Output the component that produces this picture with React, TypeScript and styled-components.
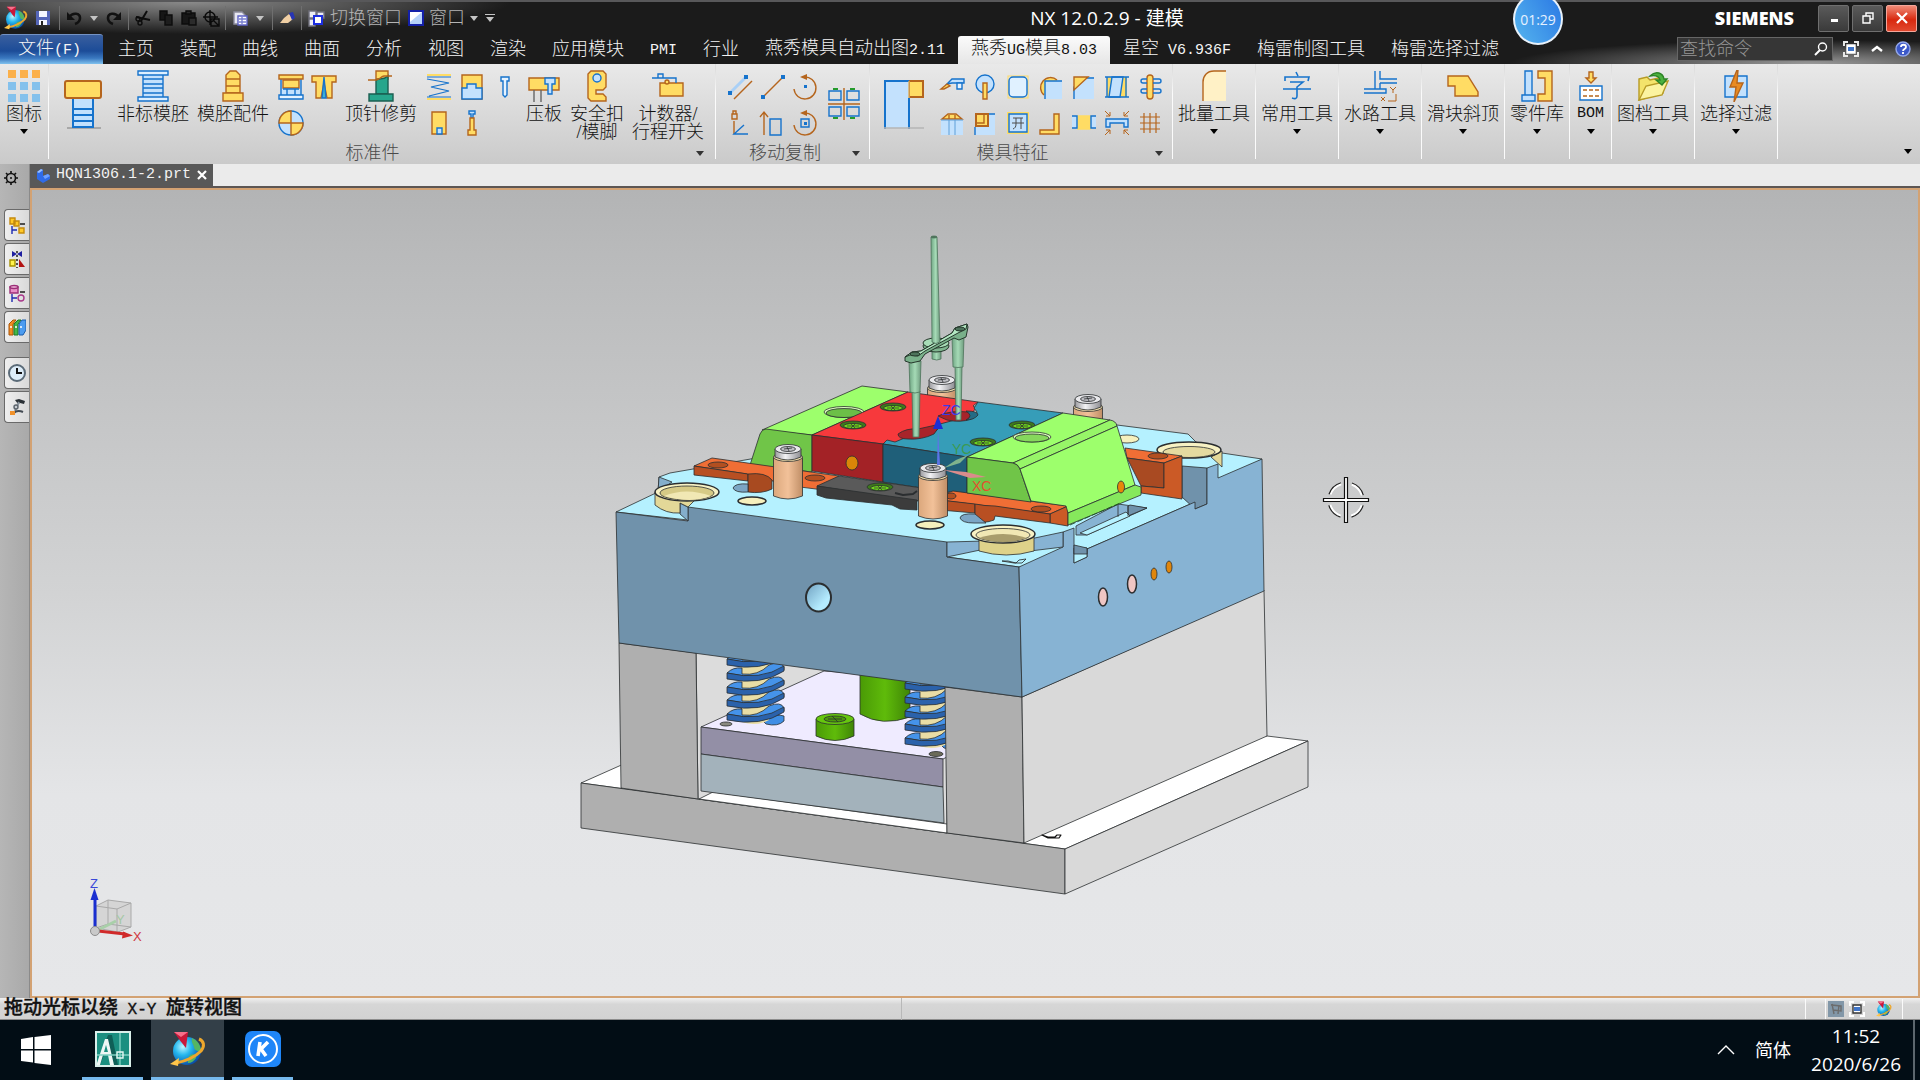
import React from "react";
import styled, { createGlobalStyle } from "styled-components";

const SONG = `"Liberation Serif", "Noto Sans CJK SC", serif`;
const MONO = `"Liberation Mono", "Noto Sans CJK SC", monospace`;
const UI = `"Open Sans", "Noto Sans CJK SC", sans-serif`;

const B = "#1673cc";
const LB = "#c3e1fd";
const O = "#b5651d";
const Y = "#ffdc64";

const GlobalStyle = createGlobalStyle`
  *, *::before, *::after { box-sizing: border-box; }
  body { margin: 0; background: #020d15; }
  button, input { font: inherit; color: inherit; margin: 0; padding: 0; border: 0; background: none; }
  svg { display: block; flex: none; }
  text { white-space: pre; }
`;

const Shell = styled.div`
  display: flex;
  flex-direction: column;
  min-height: 100vh;
  overflow: hidden;
  font: 300 18px/18px ${SONG};
  color: #111;
`;

/* ---------- title bar ---------- */
const TitleBar = styled.header`
  display: flex;
  align-items: center;
  height: 34px;
  border-top: 2px solid #58585a;
  background: radial-gradient(ellipse 320px 32px at 190px 0, #8a8a8a, rgba(27, 27, 27, 0)), #1b1b1b;
  color: #fff;
`;
const QuickAccess = styled.div`
  display: flex;
  align-items: center;
  height: 24px;
  padding-left: 2px;
  color: #b4b4b4;
`;
const QuickButton = styled.button<{ $w?: number }>`
  display: flex;
  align-items: center;
  justify-content: center;
  gap: 5px;
  height: 24px;
  width: ${(p) => (p.$w ? `${p.$w}px` : "auto")};
  padding: 0 3px;
  white-space: nowrap;
`;
const QuickRule = styled.span`
  width: 1px;
  height: 24px;
  margin: 0 3px;
  background: #6f6f6f;
`;
const WindowTitle = styled.h1`
  flex: 1;
  margin: 0;
  text-align: center;
  font: 400 19px/24px ${UI};
`;
const Brand = styled.span`
  margin-right: 24px;
  font: 800 18px/24px ${UI};
`;
const WindowButtons = styled.div`
  display: flex;
  gap: 3px;
  padding-right: 3px;
`;
const WindowButton = styled.button<{ $close?: boolean }>`
  display: flex;
  align-items: center;
  justify-content: center;
  width: 31px;
  height: 27px;
  border: 1px solid ${(p) => (p.$close ? "#f4a79b" : "#6f6f6f")};
  border-radius: 2px;
  background: ${(p) => (p.$close ? "linear-gradient(#f08a76, #d8290f 55%, #e2492f)" : "linear-gradient(#5a5a5a, #3a3a3a)")};
`;
const Timer = styled.div`
  position: absolute;
  top: -7px;
  right: 357px;
  width: 50px;
  height: 52px;
  border: 2px solid #e8f1fa;
  border-radius: 50%;
  background: linear-gradient(60deg, #55b4ee, #2a78e4);
  color: #e6f1ff;
  text-align: center;
  font: 400 14px/50px ${UI};
`;

/* ---------- tab row ---------- */
const TabRow = styled.nav`
  display: flex;
  align-items: flex-end;
  height: 30px;
  background: radial-gradient(ellipse 300px 24px at calc(100% - 110px) 100%, #9a9a9a, rgba(27, 27, 27, 0)), #1b1b1b;
  color: #f4f4f4;
`;
const FileButton = styled.button`
  width: 103px;
  height: 30px;
  margin-right: 2px;
  padding-right: 4px;
  border-top: 1px solid #7392c4;
  border-radius: 3px 3px 0 0;
  background: linear-gradient(#3a5f9e, #1c4c98 55%, #3a78c0 80%, #7fc1ee);
`;
const Tab = styled.button<{ $active?: boolean }>`
  height: 28px;
  padding: 0 13px 2px;
  border-radius: 3px 3px 0 0;
  white-space: nowrap;
  background: ${(p) => (p.$active ? "linear-gradient(#fbfbfb, #e6e6e6)" : "none")};
  color: ${(p) => (p.$active ? "#111" : "inherit")};
`;
const MonoText = styled.span<{ $size?: number }>`
  font-family: ${MONO};
  font-size: ${(p) => p.$size ?? 15}px;
`;
const TabTools = styled.div`
  display: flex;
  align-items: center;
  gap: 10px;
  height: 30px;
  margin-left: auto;
  padding-right: 9px;
`;
const SearchBox = styled.label`
  display: flex;
  align-items: center;
  width: 156px;
  height: 24px;
  padding: 0 4px 0 2px;
  border: 1px solid #666;
  background: #363636;
`;
const SearchInput = styled.input`
  flex: 1;
  min-width: 0;
  outline: 0;
  color: #ddd;
  &::placeholder { color: #969696; opacity: 1; }
`;

/* ---------- ribbon ---------- */
const Ribbon = styled.section`
  display: flex;
  height: 100px;
  background: linear-gradient(#e9e9e9, #cacaca);
`;
const Group = styled.div<{ $pl?: number; $pr?: number }>`
  display: flex;
  flex-direction: column;
  padding: 2px ${(p) => p.$pr ?? 0}px 0 ${(p) => p.$pl ?? 0}px;
  border-right: 1px solid;
  border-image: linear-gradient(#dcdcdc 5%, #fbfbfb 30%, #fbfbfb 94%, transparent 94%) 1;
`;
const GroupBody = styled.div`
  display: flex;
  height: 76px;
`;
const GroupFooter = styled.div`
  display: flex;
  align-items: center;
  height: 22px;
  color: #4a4a4a;
  text-align: center;
`;
const GroupName = styled.span`
  flex: 1;
`;
const LaunchButton = styled.button`
  display: flex;
  justify-content: center;
  width: 16px;
`;
const Tool = styled.button<{ $pad?: number }>`
  display: flex;
  flex-direction: column;
  align-items: center;
  padding: 0 ${(p) => p.$pad ?? 4}px;
  white-space: pre-line;
  text-align: center;
`;
const ToolIcon = styled.span`
  display: flex;
  align-items: center;
  height: 39px;
`;
const ToolArrow = styled.span`
  padding-top: 6px;
`;
const BigButton = styled.button<{ $w: number }>`
  display: flex;
  align-items: center;
  justify-content: center;
  width: ${(p) => p.$w}px;
`;
const IconGrid = styled.div<{ $cols: number }>`
  display: grid;
  grid-template-columns: repeat(${(p) => p.$cols}, 33px);
  grid-auto-rows: 36px;
  align-content: start;
  padding: 3px 1px 0;
`;
const IconButton = styled.button`
  display: flex;
  align-items: center;
  justify-content: center;
`;
const Overflow = styled.button`
  display: flex;
  align-self: flex-end;
  margin: 0 8px 10px auto;
`;

/* ---------- work area ---------- */
const Work = styled.main`
  display: flex;
  flex: 1;
  min-height: 0;
`;
const ResourceBar = styled.aside`
  display: flex;
  flex-direction: column;
  gap: 2px;
  width: 30px;
  padding-left: 4px;
  border-right: 1px solid #8a8a8a;
  background: linear-gradient(90deg, #b6b6b6, #a9a9a9);
`;
const GearButton = styled.button`
  height: 28px;
  margin-bottom: 15px;
`;
const ResourceTab = styled.button<{ $gap?: boolean }>`
  display: flex;
  align-items: center;
  justify-content: center;
  height: 32px;
  margin-top: ${(p) => (p.$gap ? 12 : 0)}px;
  border: 1px solid #6a6a6a;
  border-right: 0;
  border-radius: 4px 0 0 4px;
  background: linear-gradient(90deg, #efefef, #d9d9d9);
`;
const DocumentArea = styled.div`
  display: flex;
  flex: 1;
  flex-direction: column;
  min-width: 0;
`;
const DocumentTabs = styled.div`
  display: flex;
  height: 24px;
  border-bottom: 2px solid #5c5654;
  background: #ebebeb;
`;
const DocumentTab = styled.div`
  display: flex;
  align-items: center;
  gap: 6px;
  padding: 0 6px 0 5px;
  background: #585858;
  color: #f2f2f2;
`;
const Viewport = styled.div`
  display: flex;
  flex: 1;
  min-height: 0;
  border: 2px solid #d3a273;
  background: linear-gradient(#b3b4b5, #b9babb 8%, #d2d3d4 50%, #e4e5e7 75%, #e6e7e9);
`;
const Scene = styled.svg`
  flex: 1;
  width: 100%;
`;

/* ---------- status bar ---------- */
const StatusBar = styled.footer`
  display: flex;
  align-items: center;
  height: 22px;
  border-bottom: 1px solid #8c8c8c;
  background: linear-gradient(#f0f0f0, #d6d6d6 30%, #d2d2d2);
`;
const Prompt = styled.p`
  width: 47%;
  margin: 0;
  padding-left: 4px;
  border-right: 1px solid #b8b8b8;
  font: 500 19px/20px ${SONG};
  -webkit-text-stroke: 0.4px #111;
`;
const StatusCell = styled.div<{ $w: number; $push?: boolean }>`
  display: flex;
  align-items: center;
  gap: 5px;
  width: ${(p) => p.$w}px;
  height: 20px;
  margin-left: ${(p) => (p.$push ? "auto" : 0)};
  padding-left: 2px;
  border-left: 1px solid #fafafa;
`;
const StatusGlobe = styled.span`
  padding-left: 6px;
`;

/* ---------- taskbar ---------- */
const Taskbar = styled.div`
  display: flex;
  align-items: stretch;
  height: 60px;
  background: #020d15;
  color: #fff;
  font: 400 19px/28px ${UI};
`;
const StartButton = styled.button`
  display: flex;
  align-items: center;
  justify-content: center;
  width: 72px;
  margin-right: 4px;
`;
const TaskButton = styled.button<{ $active?: boolean }>`
  display: flex;
  align-items: center;
  justify-content: center;
  width: 73px;
  margin-right: 2px;
  border-bottom: 3px solid transparent;
  background: ${(p) =>
    p.$active
      ? "linear-gradient(#76b9ed, #76b9ed) bottom / 100% 3px no-repeat border-box, #333f48"
      : "linear-gradient(#76b9ed, #76b9ed) bottom / 61px 3px no-repeat border-box"};
`;
const Tray = styled.div`
  display: flex;
  align-items: center;
  gap: 20px;
  margin-left: auto;
  padding-right: 12px;
`;
const InputMode = styled.button`
  font: 400 18px/24px ${UI};
`;
const Clock = styled.button`
  font: 400 19px/28px ${UI};
  text-align: center;
  white-space: pre-line;
`;
const ShowDesktop = styled.button`
  width: 7px;
  border-left: 2px solid #5c666d;
`;

/* Latin runs are set in a half-width face beside the full-width characters. */
const Mixed = ({ children, size = 15 }: { children: string; size?: number }) => (
  <>
    {children.split(/([ -~]+)/).map((run, i) => (i % 2 ? <MonoText key={i} $size={size}>{run}</MonoText> : run))}
  </>
);

/* ---------- icons ---------- */
type IconProps = { w: number; h?: number; box?: string; children: React.ReactNode };
const Icon = ({ w, h = w, box, children }: IconProps) => (
  <svg width={w} height={h} viewBox={box ?? `0 0 ${w} ${h}`} fill="none" strokeWidth="1.4" aria-hidden="true">
    {children}
  </svg>
);
const Arrow = ({ color = "#000" }: { color?: string }) => (
  <Icon w={8} h={5}><path d="M0 0h8L4 5z" fill={color} /></Icon>
);

const Globe = ({ size }: { size: number }) => (
  <Icon w={size} box="0 0 36 36">
    <defs>
      <radialGradient id={`globe${size}`} cx=".35" cy=".35" r=".75">
        <stop offset="0" stopColor="#bdf6ff" /><stop offset=".4" stopColor="#25b7ee" /><stop offset="1" stopColor="#063e9c" />
      </radialGradient>
    </defs>
    <circle cx="17" cy="20" r="14" fill={`url(#globe${size})`} />
    <path d="M22 7c5 2 9 7 9 13-3 1-7-1-7-4 0-2-3-4-2-9zM20 24c4-2 7 0 6 3-2 3-5 5-8 5 0-3 0-6 2-8z" fill="#55b562" />
    <path d="M4 1h14l-2 16C12 12 8 7 4 1z" fill="#c9183a" />
    <path d="M4 1h14l-7 5z" fill="#f6708a" />
    <path d="M29 8c5 2 6 7 2 12-6 6-15 10-25 12" stroke="#eda72d" strokeWidth="3" />
    <path d="M0 33l9-6-1 8z" fill="#ffc64a" />
  </Icon>
);

const Save = () => (
  <Icon w={16}>
    <path d="M1 1h14v14H1z" fill="#5566b8" />
    <path d="M4 1h8v6H4zM4 10h8v5H4z" fill="#f4f6ff" /><path d="M6 11h2v4H6z" fill="#222" />
  </Icon>
);
const Undo = ({ flip }: { flip?: boolean }) => (
  <Icon w={16}>
    <g transform={flip ? "matrix(-1 0 0 1 16 0)" : undefined}>
      <path d="M3 7c4-5 11-4 11 1 0 3-2 5-5 6" stroke="#111" strokeWidth="2.6" /><path d="M1 2v8h8z" fill="#111" />
    </g>
  </Icon>
);
const Cut = () => (
  <Icon w={16}><path d="M12 1L6 11M1 7l14 3" stroke="#0c0c0c" strokeWidth="2" /><circle cx="5" cy="13" r="2" stroke="#0c0c0c" /><circle cx="3" cy="9" r="2" stroke="#0c0c0c" /></Icon>
);
const Copy = () => (
  <Icon w={16}><path d="M2 1h7v9H2z" fill="#161616" stroke="#0c0c0c" /><path d="M7 5h7v10H7z" fill="#1d1d1d" stroke="#0c0c0c" /></Icon>
);
const Paste = () => (
  <Icon w={16}><path d="M1 3h13v11H1z" fill="#171717" stroke="#0c0c0c" /><path d="M5 1h5v3H5zM8 8h7v7H8z" fill="#2b2b2b" stroke="#0c0c0c" /></Icon>
);
const Target = () => (
  <Icon w={17}><circle cx="7" cy="7" r="5" stroke="#0a0a0a" /><path d="M7 0v15M0 7h15M8 9h8v7H8zM10 10l5 5" stroke="#0a0a0a" /></Icon>
);
const SheetIcon = () => (
  <Icon w={16}><path d="M2 2h8l3 3v9H2z" fill="#e8e8f2" stroke="#8c8c9c" /><path d="M6 6h9v9H6z" fill="#fff" stroke="#5d62c5" /><path d="M7 9h7M7 12h7M10 7v7" stroke="#7a80d0" /></Icon>
);
const Hand = () => (
  <Icon w={17}><path d="M1 13l4-5 5-4 4 5-5 4z" fill="#f0cfa4" /><path d="M10 3l4-1 2 6-3 2z" fill="#2734b4" /></Icon>
);
const SwitchWindow = () => (
  <Icon w={17}><path d="M1 1h7v7H1zM9 2h7v6H9zM1 9h6v7H1z" fill="#ececf4" stroke="#70707c" /><path d="M6 6h8v8H6z" fill="#fff" stroke="#1b2de0" strokeWidth="2" /></Icon>
);
const WindowIcon = () => (
  <Icon w={16}><path d="M1 1h14v14H1z" fill="#b6d2fa" stroke="#1420a8" strokeWidth="2" /><path d="M2 2h12L2 12z" fill="#fff" /></Icon>
);

const Full = ({ dark }: { dark?: boolean }) => (
  <Icon w={16}>
    <path d="M1 5V1h4M11 1h4v4M15 11v4h-4M5 15H1v-4" stroke={dark ? "#fff" : "#e8e8e8"} strokeWidth="2" />
    <path d="M4 4h8v8H4z" fill="#fff" stroke={dark ? "#333" : "#fff"} /><path d="M5 6h6v4H5z" fill="#3f74c8" />
  </Icon>
);

const AppGrid = () => (
  <Icon w={32}>
    {[0, 12, 24].map((y) => [0, 12, 24].map((x) => <rect key={`${x}-${y}`} x={x} y={y} width="8" height="8" fill={y ? "#84c1ec" : "#fbb04a"} />))}
  </Icon>
);
const BigBolt = () => (
  <Icon w={38} h={49}>
    <path d="M3 48h34" stroke="#999" /><path d="M9 18h20v29H9z" fill="#c3e1fd" stroke={B} strokeWidth="2" />
    <path d="M9 29h20M9 35h20M9 41h20" stroke={B} strokeWidth="2" />
    <rect x="1" y="1" width="36" height="17" rx="2" fill={Y} stroke={O} strokeWidth="2" />
  </Icon>
);
const MoldBase = () => (
  <Icon w={32}><path d="M6 4h20v24H6z" fill={LB} stroke={B} /><path d="M1 1h30v4H1zM1 27h30v4H1z" fill="#dcefff" stroke={B} /><path d="M6 9h20M6 14h20M6 18h20M6 23h20" stroke={B} /></Icon>
);
const BaseParts = () => (
  <Icon w={24} h={32}><path d="M5 23V5l4-4h6l4 4v18z" fill={Y} stroke={O} /><path d="M2 23h20v8H2z" fill={Y} stroke={O} /><path d="M5 9h14M5 16h14" stroke={O} /></Icon>
);
const TrimPin = () => (
  <Icon w={26} h={32}><path d="M8 1h12v8H8z" fill={Y} stroke={O} /><path d="M8 10c4-2 8 0 12-4v18H8z" fill="#27a68c" stroke="#1b5f52" /><path d="M1 24h24v7H1z" fill="#27a68c" stroke="#1b5f52" /><path d="M0 10h8c4 0 5-4 8-4h8" stroke={O} /></Icon>
);
const Clamp = () => (
  <Icon w={32}><path d="M1 8h30v12H1z" fill={Y} stroke={O} /><path d="M6 20v12M13 20v12" stroke="#666" /><path d="M17 8h10v6h-3v10h-4V14h-3z" fill={LB} stroke={B} /></Icon>
);
const Buckle = () => (
  <Icon w={20} h={32}><path d="M4 1h12l3 3v13l-3 3h-7v4h7l3 3v4H4l-3-3V4z" fill={Y} stroke={O} /><circle cx="10" cy="8" r="4" fill={LB} stroke={B} /></Icon>
);
const Counter = () => (
  <Icon w={32} h={30}><path d="M8 12h23v13H8z" fill={Y} stroke={O} /><path d="M0 7h24v5M6 7V3h5v4" stroke={B} /><circle cx="15" cy="11" r="2" fill={Y} stroke={O} /></Icon>
);

const smallIcons: Record<string, React.ReactNode> = {
  bush: <><path d="M4 5h20v18H4z" fill={LB} stroke={B} /><path d="M6 7h16v8H6z" fill={Y} stroke={O} /><path d="M2 2h24v4H2z" fill={Y} stroke={O} /><path d="M2 22h24v4H2z" fill="#e6f3ff" stroke={B} /><path d="M6 16h16M10 16v6M18 16v6" stroke={B} /></>,
  sleeve: <><path d="M2 3h24v6h-4v16h-5L14 10l-3 15H6V9H2z" fill={Y} stroke={O} /><path d="M14 4l2 21h-4z" fill="#41b3d1" stroke={B} /></>,
  disc: <><circle cx="14" cy="14" r="12" fill={LB} stroke={B} /><path d="M14 14V2A12 12 0 0 0 2 14zM14 14v12a12 12 0 0 0 12-12z" fill={Y} stroke={O} /></>,
  spring: <><path d="M2 2h24M2 26h24" stroke={Y} strokeWidth="2" /><path d="M2 4h24M2 6l22 4-18 4 18 4-20 5M2 24h24" stroke={B} strokeWidth="1.200" /></>,
  insert: <><path d="M4 2h20v24H4z" fill={Y} stroke={O} /><path d="M4 26V15h5v-4h9v4h6v11z" fill={LB} stroke={B} /></>,
  pin: <path d="M10 4h8v4h-2v14l-2 2-2-2V8h-2z" fill="#e6f3ff" stroke={B} />,
  block: <><path d="M7 3h14v22H7z" fill={Y} stroke={O} /><path d="M12 19h5v6h-5z" fill={LB} stroke={B} /></>,
  rod: <><path d="M11 2h6v3h-2v4h-2V5h-2z" fill={LB} stroke={B} /><path d="M12 9h4v12h2v5h-8v-5h2z" fill={Y} stroke={O} /></>,
  parallel: <><path d="M4 20L20 4" stroke="#a9d0f7" strokeWidth="3" /><path d="M8 26L26 8" stroke={O} /><path d="M2 18h4v4H2zM18 2h4v4h-4z" fill={B} /></>,
  line: <><path d="M4 24L24 4" stroke={O} /><path d="M2 22h4v4H2zM22 2h4v4h-4z" fill={B} /></>,
  rotate: <><path d="M12 4a11 11 0 1 1-10 12" stroke={O} /><path d="M8 4l7-3v6z" fill={O} /><path d="M12 12h3v3h-3z" fill={B} /></>,
  axis: <><path d="M6 5h5v5H6zM7 5V2h3v3" stroke={O} /><path d="M8 12v13" stroke={O} /><path d="M22 25H8L18 16" stroke={B} /></>,
  moveUp: <><path d="M5 26V4M1 8l4-5 4 5" stroke={O} /><path d="M11 10h11v16H11z" stroke={B} /></>,
  rotateBox: <><path d="M12 4a11 11 0 1 1-10 12" stroke={O} /><path d="M8 4l7-3v6z" fill={O} /><path d="M9 10h8v8H9z" stroke={B} /><path d="M12 13h3v3h-3z" fill={B} /></>,
  nozzle: <><path d="M9 11l5-5h12v4H14z" fill={LB} stroke={B} /><path d="M19 10h5v6h-5z" fill="#e6f3ff" stroke={B} /><path d="M3 16l6-5 3 2-6 3z" fill={Y} stroke={O} /></>,
  probe: <><circle cx="14" cy="11" r="9" fill={LB} stroke={B} /><path d="M12 10h4v16h-4z" fill={Y} stroke={O} /></>,
  round: <><rect x="4" y="3" width="20" height="22" stroke={Y} strokeWidth="1" /><rect x="5" y="4" width="18" height="20" rx="4" fill="#e0f1ff" stroke={B} /></>,
  fillet: <><path d="M7 22A9 9 0 1 1 20 7" fill={Y} stroke={O} /><path d="M8 8h17v18H8z" fill={LB} /><path d="M8 26V8h17" stroke={B} /></>,
  chamfer: <><path d="M4 4h20v22H4z" fill={LB} /><path d="M4 26V14L14 5h10" stroke={B} /><path d="M4 4h14L4 17z" fill={Y} stroke={O} /></>,
  slant: <><path d="M4 4h20v20H4z" fill={Y} /><path d="M9 4h11l-3 20H6z" fill={LB} stroke={B} /><path d="M2 4h24M2 24h24M4 4v20M23 4v20" stroke={B} /></>,
  rails: <><rect x="11" y="2" width="6" height="24" rx="3" fill={Y} stroke={O} /><path d="M11 10H7a2 2 0 0 1 0-4h4M11 20H7a2 2 0 0 1 0-4h4M17 6h6a2 2 0 0 1 0 4h-6M17 16h6a2 2 0 0 1 0 4h-6" stroke={B} /></>,
  trapezoid: <><path d="M3 11h22v15H3z" fill={LB} /><path d="M4 10l6-5h8l6 5z" fill={Y} stroke={O} /><path d="M11 6v4M17 6v4" stroke={O} /><path d="M3 11h22M11 11v15M17 11v15" stroke="#5f9fd8" strokeWidth="1" /></>,
  corner: <><path d="M4 5h20v21H4z" fill={LB} /><path d="M5 5h12v12H5z" fill={Y} stroke={O} strokeWidth="2" /><path d="M5 14h8V5" stroke={O} /><path d="M4 26v-8M18 5h6" stroke={B} /></>,
  open: <><rect x="4" y="4" width="20" height="20" stroke={Y} strokeWidth="2" /><path d="M5 5h18v18H5z" fill={LB} stroke={B} /><path d="M9 9h10M8 14h12M12 9v6c0 3-1 4-3 5M17 9v11" stroke="#4c4c4c" strokeWidth="1" /></>,
  ell: <path d="M22 5v20H3v-4h14V5z" fill={Y} stroke={O} />,
  wide: <><path d="M8 7h12v13H8z" fill={Y} stroke={Y} /><path d="M2 7h5v12H2M26 7h-5v12h5" fill={LB} stroke={B} /></>,
  bracket: <><path d="M3 10h22v8h-4v-4H7v4H3z" fill={LB} stroke={B} /><path d="M2 2l5 5M7 3v4H3M26 2l-5 5M21 3v4h4M2 26l5-5M3 21h4v4M26 26l-5-5M25 21h-4v4" stroke={O} strokeWidth="1" /></>,
  mesh: <path d="M8 4v20M14 4v20M20 4v20M4 8h20M4 14h20M4 20h20" stroke={O} strokeWidth="1.200" />,
};

const SmallTool = ({ name }: { name: string }) => (
  <IconButton aria-label={name}><Icon w={28}>{smallIcons[name]}</Icon></IconButton>
);

const Array4 = () => (
  <Icon w={32} h={32}>
    <path d="M16 0v32M0 16h32" stroke={O} /><path d="M1 3h12v9H1zM19 3h12v9H19zM1 19h12v9H1zM19 19h12v9H19z" stroke={B} />
    <path d="M5 0h5v2H5zM22 0h5v2h-5zM5 29h5v2H5zM22 29h5v2h-5z" fill="#259b2c" />
  </Icon>
);
const BigCorner = () => (
  <Icon w={40} h={49}>
    <path d="M25 1h14v16H25z" fill={Y} stroke={O} strokeWidth="2" /><path d="M1 1h24v47H1z" fill={LB} />
    <path d="M1 49V1h24M25 18v31" stroke={B} strokeWidth="2" /><path d="M25 1v17" stroke="#dcae5a" /><path d="M0 48h40" stroke="#b5b5b5" />
  </Icon>
);

const menuTools: { label: string; icon: React.ReactNode; pad?: number }[] = [
  { label: "批量工具", icon: <Icon w={24} h={32}><path d="M1 31V12C1 6 5 1 12 1h12v30z" fill="#fff1c6" /><path d="M1 31V12C1 6 5 1 12 1h12" stroke={O} /></Icon> },
  { label: "常用工具", icon: <Icon w={30} h={30}><path d="M14 1l2 4M3 10V6h24l-1 4M8 11h13l-6 5v9c0 3-2 3-5 2M1 18h28" stroke={B} strokeWidth="1.6" /></Icon> },
  { label: "水路工具", icon: <Icon w={34} h={32}><path d="M12 1v18M17 1v8h17M17 13h17M17 13v6M1 19h22v4H1" stroke={B} /><path d="M33 24v7h-8M27 17l3 3 3-3M30 20v3M18 27l4 4M22 27l-4 4" stroke={O} strokeWidth="1" /></Icon> },
  { label: "滑块斜顶", icon: <Icon w={32} h={24}><path d="M1 2h20l10 16v4H8V12H1z" fill={Y} stroke={O} /></Icon> },
  { label: "零件库", icon: <Icon w={34} h={32}><path d="M5 1h7v24H5zM2 25h13v6H2z" fill={LB} stroke={B} /><path d="M18 1h14v30H18v-7h7V8h-7z" fill={Y} stroke={O} /></Icon> },
  { label: "BOM", pad: 6, icon: <Icon w={24} h={30}><path d="M10 1h4v6h3l-5 5-5-5h3z" fill={Y} stroke={O} /><path d="M1 15h22v14H1z" fill="#fff" stroke={B} /><path d="M4 19h16M4 25h16" stroke={O} strokeDasharray="4 2" /></Icon> },
  { label: "图档工具", icon: <Icon w={32}><path d="M2 9l8-2 3 3 13-3v16L2 30z" fill="#f3e36b" stroke="#b79b26" /><path d="M2 30L9 16l22-5-6 14z" fill="#fbf3a0" stroke="#b79b26" /><path d="M13 6c6-6 13-3 14 3h3l-5 6-6-5h4c-1-4-5-5-10-4z" fill="#4bb13f" stroke="#2d8427" /></Icon> },
  { label: "选择过滤", icon: <Icon w={26} h={32}><path d="M2 6h22v21H2z" fill={LB} stroke={B} /><path d="M14 0L7 17h6l-2 15 9-19h-6l1-13z" fill="#e98b23" stroke={O} /></Icon> },
];

const resourceIcons: React.ReactNode[] = [
  <><path d="M2 2h5v6H2zM6 5h5v5H6zM11 12h5v5h-5z" fill="#ffc928" stroke="#c58a0c" /><path d="M4 10v8M4 14h5" stroke="#1f2bb0" /><path d="M12 8h5" stroke="#111" /></>,
  <><path d="M4 1l5 3 5-3v6L9 4 4 7z" fill="#1f1fa0" /><path d="M9 1v17" stroke="#111" strokeDasharray="2 2" /><path d="M2 10h5v6H2z" fill="#fff34d" stroke="#a69100" /><path d="M11 9l6 8h-6z" fill="#b31414" /></>,
  <><path d="M2 3h8v6H2z" fill="#e98fc6" stroke="#9c2f78" /><ellipse cx="6" cy="3" rx="4" ry="1.5" fill="#f7c2e2" stroke="#9c2f78" /><path d="M4 10v8M4 14h5" stroke="#1f2bb0" /><path d="M12 8h5" stroke="#111" /><circle cx="13" cy="14" r="3" stroke="#a8398b" /></>,
  <><path d="M1 6l4-4h3L5 6v11H1z" fill="#f08b22" stroke="#a95507" strokeWidth="1" /><path d="M6 6l4-4h3l-3 4v11H6z" fill="#42b749" stroke="#1d7a26" strokeWidth="1" /><path d="M11 6l3-4h4v10l-3 5h-4z" fill="#4c9cf0" stroke="#1b5cab" strokeWidth="1" /><path d="M2 9h2M7 9h2M12 9h2" stroke="#fff" /></>,
  <><circle cx="9" cy="9" r="8" fill="#dcecf8" stroke="#5b6b78" strokeWidth="2" /><path d="M9 4v5h5" stroke="#111" strokeWidth="2" /></>,
  <><path d="M7 2l4-1 6 2-1 3-4-1-2 1z" fill="#2b3136" /><path d="M11 4l-4 9" stroke="#8a949e" strokeWidth="2" /><circle cx="8" cy="9" r="2" fill="#c7ccd2" stroke="#5b636b" /><path d="M6 15c2-3 7-2 9-1" stroke="#434a52" strokeWidth="2" /><path d="M2 13h5v4H2z" fill="#f0912b" /></>,
];

/* ---------- model drawing ---------- */
const P = ({ d, f }: { d: string; f: string }) => <polygon points={d} fill={f} />;

const Pillar = ({ x, y, h }: { x: number; y: number; h: number }) => (
  <g transform={`translate(${x} ${y})`}>
    <path d={`M-14.500 8v${h}q14.500 6 29 0V8z`} fill="url(#peach)" />
    <ellipse cx="0" cy="8" rx="14.500" ry="4.500" fill="#f2dfae" />
    <path d="M-13 0v8q13 6 26 0V0z" fill="url(#steel)" />
    <ellipse cx="0" cy="0" rx="13" ry="4.500" fill="#e9e9ec" />
    <ellipse cx="0" cy="0" rx="7.500" ry="2.500" fill="#bdbdc2" />
    <path d="M-4 0l8-1M-1 -2l2 4" strokeWidth=".8" />
  </g>
);
const Spring = ({ x, y }: { x: number; y: number }) => (
  <g transform={`translate(${x} ${y})`}>
    <path d="M36 60q14-8 21-5v5q-6 6-18 3z" fill="#3f8ee4" strokeWidth=".8" />
    <path d="M15 -6v67q14 5 27-2V-6z" fill="#e9dda5" stroke="none" />
    {[-12, 2, 16, 29, 43].map((t) => (
      <g key={t} transform={`translate(0 ${t})`} strokeWidth=".8">
        <path d="M0 10q6-6 15-5v6q16 2 27-9q12-5 15 2v3Q34 18 0 10z" fill="#4593ea" />
        <path d="M0 10q34 8 57-7v5Q34 23 0 16z" fill="#2b62ab" />
      </g>
    ))}
  </g>
);
const Screw = ({ x, y }: { x: number; y: number }) => (
  <g transform={`translate(${x} ${y})`}>
    <ellipse rx="13" ry="4" fill="#3d7a1c" /><ellipse cy="1" rx="9.500" ry="2.500" fill="#6fd61c" /><path d="M-6 1h12M-2-1l4 4M2-1l-4 4" strokeWidth=".7" />
  </g>
);

const Model = () => (
  <Scene viewBox="32 190 1886 806" role="img" aria-label="模具三维模型">
    <defs>
      <linearGradient id="peach"><stop offset="0" stopColor="#dba77c" /><stop offset=".5" stopColor="#f2c199" /><stop offset="1" stopColor="#c08e66" /></linearGradient>
      <linearGradient id="steel"><stop offset="0" stopColor="#9a9a9e" /><stop offset=".4" stopColor="#f2f2f4" /><stop offset="1" stopColor="#8d8d92" /></linearGradient>
      <linearGradient id="mint"><stop offset="0" stopColor="#6fa583" /><stop offset=".5" stopColor="#a5dab6" /><stop offset="1" stopColor="#6f9c7f" /></linearGradient>
      <linearGradient id="lime"><stop offset="0" stopColor="#4a9a06" /><stop offset=".5" stopColor="#5fbb0a" /><stop offset="1" stopColor="#3f8506" /></linearGradient>
      <linearGradient id="bore" x1="0" y1="0" x2="1" y2="1"><stop offset="0" stopColor="#6fa0c0" /><stop offset=".7" stopColor="#b5ecff" /></linearGradient>
    </defs>
    <g stroke="#2b2e30" strokeWidth=".8" strokeLinejoin="round" fill="none">
      {/* base plate */}
      <P d="581,783 700,730 1267,736 1308,741 1065,849" f="#fff" />
      <P d="581,783 1065,849 1065,894 581,828" f="#afafaf" />
      <P d="1065,849 1308,741 1308,787 1065,894" f="#d9d9d9" />

      {/* opening between the spacer blocks */}
      <P d="696,650 947,680 947,833 698,799" f="#dcdcdc" />
      <P d="699,799 713,792 947,824 947,833" f="#fff" />
      <P d="701,727 824,671 947,680 947,757 943,759" f="#efebff" />
      <P d="701,727 943,759 943,787 701,754" f="#938fa6" />
      <P d="701,754 943,787 944,823 701,791" f="#a3b2bb" />
      <path d="M860 670v44q22 13 50 3V675z" fill="url(#lime)" />
      <path d="M816 719v17q19 9 38 0v-17z" fill="url(#lime)" />
      <ellipse cx="835" cy="719" rx="19" ry="5.500" fill="#66c70e" />
      <ellipse cx="835" cy="719" rx="11" ry="3" fill="#4c9a0c" /><path d="M828 719h14M832 716l6 6" />
      <ellipse cx="726" cy="724" rx="6" ry="2" fill="#8a8a80" /><ellipse cx="936" cy="754" rx="7" ry="2.500" fill="#6a6a58" />
      <Spring x={727} y={661} />
      <Spring x={905} y={685} />

      {/* spacer blocks */}
      <P d="619,643 696,653 698,799 621,788" f="#afafaf" />
      <P d="945,687 1022,697 1024,843 947,833" f="#afafaf" />
      <P d="1022,697 1264,590 1267,736 1024,843" f="#d9d9d9" />
      <path d="M1042 835l6 2h7l2-2h4l-2 3h-11z" stroke="#111" strokeWidth="1.200" />

      {/* rear guide pillars */}
      <Pillar x={942} y={380} h={20} />
      <Pillar x={1088} y={399} h={20} />

      {/* blue plate */}
      <P d="616,512 658,492 659,477 670,473 860,440 1117,425 1188,434 1196,442 1222,453 1262,459 1195,502 1087,549 1087,557 1074,563 1019,567 947,557 688,520" f="#b5f1ff" />
      <P d="616,512 688,521 688,507 947,542 947,557 1019,567 1022,697 619,643" f="#7092ab" />
      <P d="680,503 688,507 688,521 680,514" f="#84aecb" />
      <P d="658,492 659,477 672,482" f="#84aecb" />
      <P d="1182,466 1207,468 1207,504 1195,509 1182,497" f="#7092ab" />
      <P d="1019,567 1063,547 1063,532 1074,528 1074,563 1087,557 1087,549 1195,502 1195,509 1207,504 1207,468 1218,464 1218,478 1262,459 1264,591 1022,697" f="#87b3d3" />
      <P d="947,542 985,541 985,549 947,557" f="#87b3d3" />
      <P d="1030,539 1063,532 1063,547 1030,551" f="#87b3d3" />
      <P d="1074,548 1087,548 1087,557 1074,563" f="#b5f1ff" />
      <P d="1074,545 1087,548 1087,554 1074,554" f="#7092ab" />
      <path d="M1002 561h6l8 2 3-3 7-1-4 4h-8z" stroke="#222" />
      <P d="1076,526 1118,504 1147,508 1087,535 1076,535" f="#87b3d3" />
      <P d="1130,505 1147,508 1128,516 1128,506" f="#7092ab" />
      <P d="1080,533 1126,512 1130,516 1087,535" f="#b5f1ff" />
      <path d="M1118 505v12M1128 506v10" />

      {/* bushings */}
      <path d="M655 492v13q11 9 25 8v-10l8 4 10-10z" fill="#e3d898" />
      <ellipse cx="687" cy="492" rx="32" ry="9" fill="#f8f2c4" strokeWidth="1.500" />
      <ellipse cx="687" cy="493" rx="27" ry="7" fill="#d6ca86" />
      <path d="M664 496q22-9 47 0-20 8-47 0z" fill="#f1e8b4" stroke="none" />
      <path d="M979 535v16q27 8 55 0v-16z" fill="#ded28a" />
      <ellipse cx="1003" cy="534" rx="32" ry="9" fill="#f8f2c4" strokeWidth="1.500" />
      <ellipse cx="1003" cy="535" rx="27" ry="6.500" fill="#f1e8b4" />
      <path d="M979 538q24-8 48 0-24 8-48 0z" fill="#a99d6c" stroke="none" />
      <path d="M1211 457l11 10v-16z" fill="#e3d898" />
      <ellipse cx="1189" cy="450" rx="32" ry="8" fill="#f8f2c4" strokeWidth="1.500" />
      <ellipse cx="1189" cy="452" rx="26" ry="5.500" fill="#e4daa0" />
      <ellipse cx="752" cy="501" rx="14" ry="4" fill="#f6f0bd" strokeWidth="1.500" />
      <ellipse cx="930" cy="525" rx="14" ry="4" fill="#f6f0bd" strokeWidth="1.500" />
      <ellipse cx="1127" cy="439" rx="12" ry="4" fill="#f6f0bd" />

      {/* rear orange rail */}
      <P d="1125,448 1182,456 1164,463 1127,458" f="#f06e35" />
      <P d="1127,458 1164,463 1164,488 1141,486" f="#a94a22" />
      <P d="1164,463 1182,456 1182,499 1141,493 1141,486 1164,488" f="#cb5a26" />
      <ellipse cx="1158" cy="456" rx="10" ry="3" fill="#b34f20" />

      {/* left slide */}
      <P d="762,430 862,386 908,392 812,435" f="#9dff6c" />
      <path d="M750 465l10-31q2-5 6-5l46 6v37z" fill="#70c548" />
      <ellipse cx="844" cy="412" rx="20" ry="5.500" fill="#dfffc0" /><ellipse cx="844" cy="413" rx="18" ry="4.500" fill="#6cbf47" />

      {/* red insert */}
      <P d="812,435 908,392 978,402 973,406 976,408 940,455 883,444" f="#f7393c" />
      <P d="812,435 883,444 883,482 812,471" f="#a32226" />
      <ellipse cx="852" cy="463" rx="6" ry="7" fill="#d98608" />
      <Screw x={893} y={407} /><Screw x={853} y={425} />

      {/* teal insert */}
      <path d="M883 444l4-4 8 2 12-5q25 1 31-8l2-5 15-4q22-1 22-8l-3-4 4-6 85 11-96 44z" fill="#369db8" />
      <P d="883,444 967,457 967,495 883,482" f="#1f5f79" />
      <path d="M898 434q8-6 20-5l18-4 3 2-5 7q-12 6-26 5-10 0-10-5z" fill="#a8242a" />
      <path d="M938 416q12-6 30-4 9 4 3 7-10 4-24 1z" fill="#a8242a" />
      <path d="M966 411q12 0 12 4-4 5-12 5 8-4 0-9z" fill="#246c85" />
      <Screw x={1022} y={425} /><Screw x={983} y={442} />

      {/* orange front rail */}
      <path d="M694 466l18-8 127 18-15 14-32-4-31-8q-14 0-14-4z" fill="#f06e35" />
      <path d="M694 466l54 8v7l-54-6z" fill="#b84f22" />
      <path d="M748 474q18-2 24 6v9q-10 5-24 3z" fill="#a84a20" />
      <ellipse cx="718" cy="465" rx="10" ry="3" fill="#b34f20" /><ellipse cx="815" cy="478" rx="10" ry="3" fill="#b34f20" />
      <path d="M748 484q-13-1-15 4 2 5 15 4z" fill="#7ba5c4" />
      <P d="940,495 953,491 1068,506 1050,514 940,500" f="#f06e35" />
      <P d="1050,514 1068,506 1068,526 1050,523" f="#cb5a26" />
      <P d="940,500 975,504 975,513 940,510" f="#b84f22" />
      <path d="M975 504q10 2 20 2l55 8v9l-55-7-1 4q-10 4-19 1z" fill="#b84f22" />
      <ellipse cx="1041" cy="509" rx="10" ry="3" fill="#b34f20" /><ellipse cx="951" cy="496" rx="5" ry="3" fill="#b34f20" />
      <path d="M975 514q-14-1-15 4 2 5 14 5h12z" fill="#7ba5c4" />

      {/* black plate */}
      <P d="817,486 839,476 922,488 918,501 905,500" f="#5a5a5a" />
      <path d="M817 486l100 14v10l-17-1-8-4-66-7-9-3z" fill="#3c3c3c" />
      <Screw x={880} y={487} />
      <path d="M895 493l8 2 10-1 4-3" strokeWidth="2" />

      {/* right slide */}
      <P d="967,457 1063,413 1110,420 1013,463" f="#9dff6c" />
      <path d="M1013 463l97-43q6 1 7 6l-97 43q-2-5-7-6z" fill="#97f568" />
      <path d="M967 457l46 6q5 1 7 6l11 33-64-9z" fill="#70c548" />
      <P d="1020,469 1117,426 1135,485 1068,513 1066,506 1031,501" f="#9dff6c" />
      <P d="1068,513 1135,485 1141,487 1141,495 1068,525" f="#86e85c" />
      <ellipse cx="1032" cy="437" rx="19" ry="5" fill="#dfffc0" /><ellipse cx="1032" cy="438" rx="17" ry="4" fill="#86d85c" />
      <ellipse cx="1121" cy="487" rx="3.500" ry="6" fill="#e88708" />
      <path d="M1070 525l50-22" stroke="#174d17" strokeDasharray="6 2" />

      {/* front guide pillars */}
      <Pillar x={788} y={449} h={39} />
      <Pillar x={933} y={468} h={40} />

      {/* holes in the plate faces */}
      <ellipse cx="818.500" cy="597.500" rx="12.500" ry="14" fill="url(#bore)" strokeWidth="2" />
      <ellipse cx="1103" cy="597" rx="4.500" ry="9" fill="#efc6c4" strokeWidth="1.500" />
      <ellipse cx="1132" cy="584" rx="4.500" ry="9" fill="#efc6c4" strokeWidth="1.500" />
      <ellipse cx="1154" cy="574" rx="3" ry="6" fill="#e0860c" /><ellipse cx="1169" cy="567" rx="3" ry="6" fill="#e0860c" />

      {/* sprue and runner */}
      <g stroke="#4d735b">
        <path d="M955 366h7l-1 54h-5z" fill="url(#mint)" />
        <path d="M952 337h12l-1 30q-5 1-10 0z" fill="url(#mint)" />
        <path d="M912 391h8l-1 46h-6z" fill="url(#mint)" />
        <path d="M909 361h12l-1 31q-5 2-10 0z" fill="url(#mint)" />
        <path d="M932 350h9v9q-4 2-9 0z" fill="url(#mint)" />
        <g stroke="#26382c" strokeWidth="1">
          <ellipse cx="936" cy="346" rx="13" ry="6" fill="#7fb58f" />
          <ellipse cx="936" cy="343" rx="13" ry="5" fill="#a7dcb6" />
          <path d="M905 357l7-5 9-1 31-18 3-5 12-4 1 3-2 10-7 3-5-2-29 16-5 7-9 2-6-2z" fill="#79b08a" />
          <path d="M905 357l7-5 9-1 31-18 3-5 12-4-1 5-8 4-33 18-7 5-8-1z" fill="#b4e8c3" />
          <ellipse cx="915" cy="354" rx="5" ry="2" fill="#4d735b" /><ellipse cx="960" cy="329" rx="5" ry="2" fill="#4d735b" />
        </g>
        <path d="M931 237h6l3 105q-4 3-8 0z" fill="url(#mint)" /><ellipse cx="934" cy="237" rx="3" ry="1" fill="#4d735b" />
      </g>
    </g>

    {/* work coordinate system */}
    <path d="M938 428l-1 37h3z" fill="#5d74e6" /><path d="M938 416l5 13h-10z" fill="#1c2fd4" />
    <path d="M944 468l12-8 12-5-8 8z" fill="#7fb38c" /><path d="M944 470l22 2 20 5-16 1z" fill="#d98c8c" />
    <g fontFamily="Liberation Sans, sans-serif" fontSize="14">
      <text x="942" y="415" fill="#3b3be8">ZC</text>
      <text x="952" y="454" fill="#3c9a52">YC</text>
      <text x="972" y="491" fill="#e2502f">XC</text>
    </g>

    {/* rotate cursor */}
    <g fill="none">
      <circle cx="1346" cy="500" r="17" stroke="#fff" strokeWidth="3" strokeDasharray="15.700 11" strokeDashoffset="-5.500" />
      <circle cx="1346" cy="500" r="18" stroke="#222" strokeWidth="1.200" strokeDasharray="17 11.300" strokeDashoffset="-5.500" />
      <path d="M1344.500 477.500h3v21h21v3h-21v21h-3v-21h-21v-3h21z" fill="#fff" stroke="#111" strokeWidth="1.200" />
    </g>

    {/* view triad */}
    <path d="M96 906l12-6 23 3v24l-13 5-22-4z" fill="#d5d5d5" stroke="#a9a9a9" />
    <path d="M96 906l21 3 14-6M117 909v23M108 900v24l-12 4M108 924l23 3" fill="none" stroke="#a9a9a9" />
    <path d="M98 930l18-9" stroke="#a9cfa9" strokeWidth="3" />
    <path d="M95 928v-32" stroke="#1a2fd0" strokeWidth="3" /><path d="M94.500 888l4 12h-8z" fill="#1a2fd0" />
    <path d="M98 931l27 3" stroke="#d02a2a" strokeWidth="3" /><path d="M133 935.500l-11 3 1-7z" fill="#d02a2a" />
    <circle cx="95" cy="931" r="4.500" fill="#c9c9c9" stroke="#8d8d8d" />
    <g fontFamily="Liberation Sans, sans-serif" fontSize="13">
      <text x="90" y="888" fill="#3a49d8">Z</text>
      <text x="116" y="924" fill="#a5c8a5">Y</text>
      <text x="133" y="941" fill="#d0383f">X</text>
    </g>
  </Scene>
);

const tabs: string[] = ["主页", "装配", "曲线", "曲面", "分析", "视图", "渲染", "应用模块", "PMI", "行业", "燕秀模具自动出图2.11", "燕秀UG模具8.03", "星空 V6.936F", "梅雷制图工具", "梅雷选择过滤"];

export default function App() {
  return (
    <Shell>
      <GlobalStyle />
      <TitleBar>
        <QuickAccess>
          <QuickButton $w={28} aria-label="NX"><Globe size={24} /></QuickButton>
          <QuickButton $w={26} aria-label="保存"><Save /></QuickButton>
          <QuickRule />
          <QuickButton $w={22} aria-label="撤销"><Undo /></QuickButton>
          <QuickButton $w={18} aria-label="撤销列表"><Arrow color="#c4c4c4" /></QuickButton>
          <QuickButton $w={22} aria-label="重做"><Undo flip /></QuickButton>
          <QuickRule />
          <QuickButton $w={22} aria-label="剪切"><Cut /></QuickButton>
          <QuickButton $w={23} aria-label="复制"><Copy /></QuickButton>
          <QuickButton $w={23} aria-label="粘贴"><Paste /></QuickButton>
          <QuickButton $w={22} aria-label="捕捉"><Target /></QuickButton>
          <QuickRule />
          <QuickButton $w={22} aria-label="表格"><SheetIcon /></QuickButton>
          <QuickButton $w={18} aria-label="表格列表"><Arrow color="#c4c4c4" /></QuickButton>
          <QuickRule />
          <QuickButton $w={22} aria-label="触控"><Hand /></QuickButton>
          <QuickRule />
          <QuickButton><SwitchWindow />切换窗口</QuickButton>
          <QuickButton><WindowIcon />窗口<Arrow color="#c4c4c4" /></QuickButton>
          <QuickButton $w={18} aria-label="更多"><Icon w={10} h={8}><path d="M0 0h10v1H0zM1 3h8L5 8z" fill="#c4c4c4" /></Icon></QuickButton>
        </QuickAccess>
        <WindowTitle>NX 12.0.2.9 - 建模</WindowTitle>
        <Brand>SIEMENS</Brand>
        <WindowButtons>
          <WindowButton aria-label="最小化"><Icon w={12}><path d="M3 7h7v3H3z" fill="#fff" /></Icon></WindowButton>
          <WindowButton aria-label="还原"><Icon w={12}><path d="M4 4V1h7v6H8M1 4h7v7H1z" stroke="#fff" /></Icon></WindowButton>
          <WindowButton $close aria-label="关闭"><Icon w={14}><path d="M2 2l10 10M12 2L2 12" stroke="#fff" strokeWidth="2.200" /></Icon></WindowButton>
        </WindowButtons>
        <Timer>01:29</Timer>
      </TitleBar>

      <TabRow>
        <FileButton><Mixed>文件(F)</Mixed></FileButton>
        {tabs.map((t) => (
          <Tab key={t} $active={t === "燕秀UG模具8.03"}><Mixed>{t}</Mixed></Tab>
        ))}
        <TabTools>
          <SearchBox>
            <SearchInput placeholder="查找命令" aria-label="查找命令" />
            <Icon w={14}><circle cx="8.500" cy="5" r="4" stroke="#fff" /><path d="M6 8l-5 5" stroke="#fff" strokeWidth="2" /></Icon>
          </SearchBox>
          <IconButton aria-label="全屏"><Full /></IconButton>
          <IconButton aria-label="最小化功能区"><Icon w={16}><path d="M3 10l5-4 5 4" stroke="#fff" strokeWidth="2.400" /></Icon></IconButton>
          <IconButton aria-label="帮助"><Icon w={16}><circle cx="8" cy="8" r="7" fill="#3b58c8" stroke="#93a7ea" /><path d="M6 6c0-3 5-3 5 0 0 2-3 2-3 4M8 11v2" stroke="#fff" strokeWidth="1.800" /></Icon></IconButton>
        </TabTools>
      </TabRow>

      <Ribbon>
        <Group>
          <GroupBody><Tool $pad={6}><ToolIcon><AppGrid /></ToolIcon>图标<ToolArrow><Arrow /></ToolArrow></Tool></GroupBody>
        </Group>
        <Group $pl={4} $pr={7}>
          <GroupBody>
            <BigButton $w={60} aria-label="螺钉"><BigBolt /></BigButton>
            <Tool><ToolIcon><MoldBase /></ToolIcon>非标模胚</Tool>
            <Tool><ToolIcon><BaseParts /></ToolIcon>模胚配件</Tool>
            <IconGrid $cols={2}>{["bush", "sleeve", "disc"].map((n) => <SmallTool key={n} name={n} />)}</IconGrid>
            <Tool><ToolIcon><TrimPin /></ToolIcon>顶针修剪</Tool>
            <IconGrid $cols={3}>{["spring", "insert", "pin", "block", "rod"].map((n) => <SmallTool key={n} name={n} />)}</IconGrid>
            <Tool><ToolIcon><Clamp /></ToolIcon>压板</Tool>
            <Tool><ToolIcon><Buckle /></ToolIcon>{"安全扣\n/模脚"}</Tool>
            <Tool><ToolIcon><Counter /></ToolIcon>{"计数器/\n行程开关"}</Tool>
          </GroupBody>
          <GroupFooter><GroupName>标准件</GroupName><LaunchButton aria-label="标准件选项"><Arrow color="#333" /></LaunchButton></GroupFooter>
        </Group>
        <Group $pl={6} $pr={5}>
          <GroupBody>
            <IconGrid $cols={3}>{["parallel", "line", "rotate", "axis", "moveUp", "rotateBox"].map((n) => <SmallTool key={n} name={n} />)}</IconGrid>
            <BigButton $w={41} aria-label="阵列"><Array4 /></BigButton>
          </GroupBody>
          <GroupFooter><GroupName>移动复制</GroupName><LaunchButton aria-label="移动复制选项"><Arrow color="#333" /></LaunchButton></GroupFooter>
        </Group>
        <Group $pl={4} $pr={5}>
          <GroupBody>
            <BigButton $w={60} aria-label="特征"><BigCorner /></BigButton>
            <IconGrid $cols={7}>
              {["nozzle", "probe", "round", "fillet", "chamfer", "slant", "rails", "trapezoid", "corner", "open", "ell", "wide", "bracket", "mesh"].map((n) => <SmallTool key={n} name={n} />)}
            </IconGrid>
          </GroupBody>
          <GroupFooter><GroupName>模具特征</GroupName><LaunchButton aria-label="模具特征选项"><Arrow color="#333" /></LaunchButton></GroupFooter>
        </Group>
        {menuTools.map((m) => (
          <Group key={m.label} $pl={1} $pr={1}>
            <GroupBody>
              <Tool $pad={m.pad}>
                <ToolIcon>{m.icon}</ToolIcon>
                <Mixed>{m.label}</Mixed>
                <ToolArrow><Arrow /></ToolArrow>
              </Tool>
            </GroupBody>
          </Group>
        ))}
        <Overflow aria-label="功能区选项"><Arrow /></Overflow>
      </Ribbon>

      <Work>
        <ResourceBar>
          <GearButton aria-label="设置"><Icon w={14}><circle cx="7" cy="7" r="4.500" stroke="#111" strokeWidth="1.600" /><circle cx="7" cy="7" r="1" fill="#111" /><path d="M7 0v3M7 11v3M0 7h3M11 7h3M2 2l2 2M10 10l2 2M12 2l-2 2M4 10l-2 2" stroke="#111" strokeWidth="1.600" /></Icon></GearButton>
          {resourceIcons.map((ic, i) => (
            <ResourceTab key={i} $gap={i === 4} aria-label={`资源 ${i + 1}`}><Icon w={18}>{ic}</Icon></ResourceTab>
          ))}
        </ResourceBar>
        <DocumentArea>
          <DocumentTabs>
            <DocumentTab>
              <Icon w={15}><path d="M2 4l4-3 2 1v6l5-2 2 2v3l-7 4-6-4z" fill="#2f6be8" /><path d="M2 4l4-3 2 1-4 3z" fill="#9cc0ff" /><path d="M8 8l5-2 2 2-5 3z" fill="#6ea0ff" /></Icon>
              <MonoText>HQN1306.1-2.prt</MonoText>
              <IconButton aria-label="关闭文档"><Icon w={10}><path d="M1 1l8 8M9 1L1 9" stroke="#fff" strokeWidth="2.200" /></Icon></IconButton>
            </DocumentTab>
          </DocumentTabs>
          <Viewport><Model /></Viewport>
        </DocumentArea>
      </Work>

      <StatusBar>
        <Prompt><Mixed size={16}>拖动光标以绕 X-Y 旋转视图</Mixed></Prompt>
        <StatusCell $w={20} $push />
        <StatusCell $w={77}>
          <Icon w={16}><path d="M0 0h16v16H0z" fill="#8297a8" /><path d="M3 4l10 1v5L5 9M4 3l2 10M11 4l-1 9" stroke="#6c6c6c" /></Icon>
          <Full dark />
          <StatusGlobe><Globe size={16} /></StatusGlobe>
        </StatusCell>
        <StatusCell $w={18} />
      </StatusBar>

      <Taskbar>
        <StartButton aria-label="开始"><Icon w={30}><path d="M0 4l12-2v12H0zM13.500 2L30 0v14H13.500zM0 15.500h12v12L0 26zM13.500 15.500H30V30l-16.500-2z" fill="#fff" /></Icon></StartButton>
        <TaskButton aria-label="AutoCAD">
          <Icon w={36}><path d="M0 0h36v36H0z" fill="#d9efea" /><path d="M2 2h32v32H2z" fill="#1b8f80" /><path d="M4 28L13 4h4l6 30h-5l-2-10H9L5 34H2z" fill="#0f5f57" /><path d="M2 32L10 8h3l6 26h-4l-2-10H8L5 34H2z" fill="#eef7f5" /><path d="M9 21h4l-2-7z" fill="#1b8f80" /><path d="M2 24h32M25 2v32" stroke="#7ecfc1" /><path d="M22 21h6v6h-6z" stroke="#e3f7f3" /></Icon>
        </TaskButton>
        <TaskButton $active aria-label="NX"><Globe size={36} /></TaskButton>
        <TaskButton aria-label="K">
          <Icon w={36}><rect width="36" height="36" rx="7" fill="#1f86f8" /><circle cx="18" cy="18" r="14" stroke="#fff" strokeWidth="2" /><path d="M15 11l-2 14M23 11l-7 7 5 7" stroke="#fff" strokeWidth="3.600" /></Icon>
        </TaskButton>
        <Tray>
          <IconButton aria-label="显示隐藏的图标"><Icon w={18} h={10}><path d="M1 9l8-8 8 8" stroke="#fff" /></Icon></IconButton>
          <InputMode>简体</InputMode>
          <Clock>{"11:52\n2020/6/26"}</Clock>
        </Tray>
        <ShowDesktop aria-label="显示桌面" />
      </Taskbar>
    </Shell>
  );
}
